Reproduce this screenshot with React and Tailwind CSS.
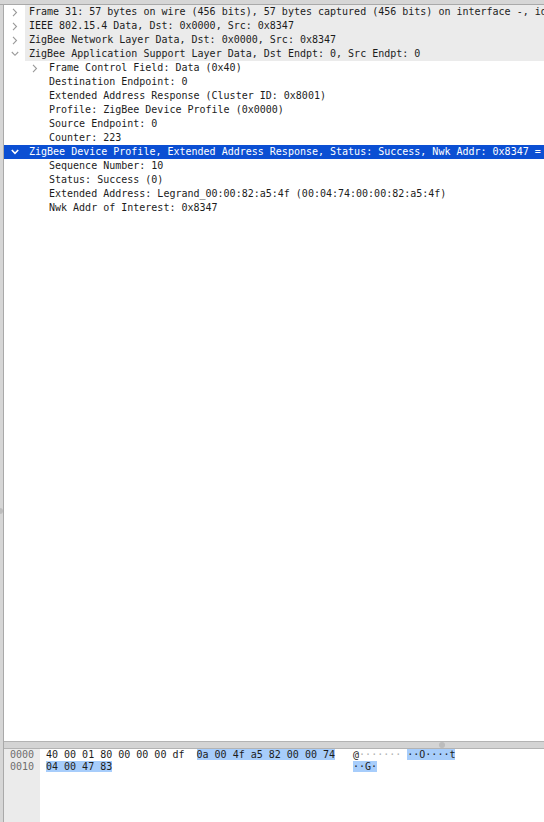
import React from 'react';

const treeRows = [
  { level: 0, arrow: 'right', text: 'Frame 31: 57 bytes on wire (456 bits), 57 bytes captured (456 bits) on interface -, id 0', shaded: true },
  { level: 0, arrow: 'right', text: 'IEEE 802.15.4 Data, Dst: 0x0000, Src: 0x8347', shaded: true },
  { level: 0, arrow: 'right', text: 'ZigBee Network Layer Data, Dst: 0x0000, Src: 0x8347', shaded: true },
  { level: 0, arrow: 'down', text: 'ZigBee Application Support Layer Data, Dst Endpt: 0, Src Endpt: 0', shaded: true },
  { level: 1, arrow: 'right', text: 'Frame Control Field: Data (0x40)' },
  { level: 1, text: 'Destination Endpoint: 0' },
  { level: 1, text: 'Extended Address Response (Cluster ID: 0x8001)' },
  { level: 1, text: 'Profile: ZigBee Device Profile (0x0000)' },
  { level: 1, text: 'Source Endpoint: 0' },
  { level: 1, text: 'Counter: 223' },
  { level: 0, arrow: 'down', text: 'ZigBee Device Profile, Extended Address Response, Status: Success, Nwk Addr: 0x8347 = Legrand_00:00:82:a5:4f', selected: true },
  { level: 1, text: 'Sequence Number: 10' },
  { level: 1, text: 'Status: Success (0)' },
  { level: 1, text: 'Extended Address: Legrand_00:00:82:a5:4f (00:04:74:00:00:82:a5:4f)' },
  { level: 1, text: 'Nwk Addr of Interest: 0x8347' },
];

const Chevron = ({ dir, selected }) => {
  const color = selected ? '#ffffff' : '#9a9a9a';
  if (dir === 'down') {
    return (
      <svg width="8" height="6" viewBox="0 0 8 6" className="block">
        <polyline points="0.8,1 4,4.3 7.2,1" fill="none" stroke={color} strokeWidth={selected ? 1.6 : 1.1} />
      </svg>
    );
  }
  return (
    <svg width="6" height="9" viewBox="0 0 6 9" className="block">
      <polyline points="1,0.8 4.5,4.5 1,8.2" fill="none" stroke={color} strokeWidth="1.1" />
    </svg>
  );
};

const TreeRow = ({ row }) => {
  const indent = row.level === 1 ? 'pl-[20px]' : 'pl-0';
  return (
    <div className={`flex h-[14px] items-center whitespace-nowrap ${row.selected ? 'bg-[#0b4fd3] text-white' : 'text-[#1c1c1c]'}`}>
      <div className={`flex shrink-0 ${indent}`}>
        <div className="flex h-[14px] w-[21px] items-center justify-center pl-[1px]">
          {row.arrow && <Chevron dir={row.arrow} selected={row.selected} />}
        </div>
      </div>
      <div className={`flex h-[14px] flex-1 items-center pl-[4px] ${row.shaded ? 'bg-[#ebebeb]' : ''}`}>
        {row.text}
      </div>
    </div>
  );
};

const Hl = ({ children }) => <span className="bg-[#a7cdfb]">{children}</span>;
const Dim = ({ children }) => <span className="text-[#b0b0b0]">{children}</span>;

export default function App() {
  return (
    <div
      className="flex h-[822px] w-[544px] flex-col overflow-hidden bg-white text-[10px]"
      style={{ fontFamily: '"DejaVu Sans Mono", "Liberation Mono", monospace' }}
    >
      {/* top frame edge */}
      <div className="h-[5px] shrink-0 border-b border-[#a9a9a9] bg-[#d6d6d6]" />

      <div className="flex min-h-0 flex-1">
        {/* left frame edge */}
        <div className="w-[4px] shrink-0 border-r border-[#a9a9a9] bg-[#d6d6d6] pt-[503px]">
          <div className="h-[6px] w-[3px] rounded-r-full bg-[#bdbdbd]" />
        </div>

        <div className="flex min-w-0 flex-1 flex-col">
          {/* packet details tree */}
          <div className="min-h-0 flex-1 overflow-hidden leading-[14px]">
            {treeRows.map((row, i) => (
              <TreeRow key={i} row={row} />
            ))}
          </div>

          {/* splitter */}
          <div className="flex h-[8px] shrink-0 items-center justify-center border-y border-[#b3b3b3] bg-[#d4d4d4] pr-[4px]">
            <div className="ml-[340px] h-[6px] w-[6px] rounded-full bg-[#bcbcbc]" />
          </div>

          {/* bytes pane */}
          <div className="flex h-[73px] shrink-0 leading-[12px]">
            <div className="w-[36px] shrink-0 bg-[#ebebeb] pl-[6px] text-[#6e6e6e]">
              <div>0000</div>
              <div>0010</div>
            </div>
            <div className="flex-1 whitespace-pre pl-[6px] text-[#1c1c1c]">
              <div>
                {'40 00 01 80 00 00 00 df  '}
                <Hl>0a 00 4f a5 82 00 00 74</Hl>
                {'   @'}
                <Dim>·······</Dim>
                {' '}
                <Hl>··O····t</Hl>
              </div>
              <div>
                <Hl>04 00 47 83</Hl>
                {'                                        '}
                <Hl>··G·</Hl>
              </div>
            </div>
          </div>
        </div>
      </div>
    </div>
  );
}
